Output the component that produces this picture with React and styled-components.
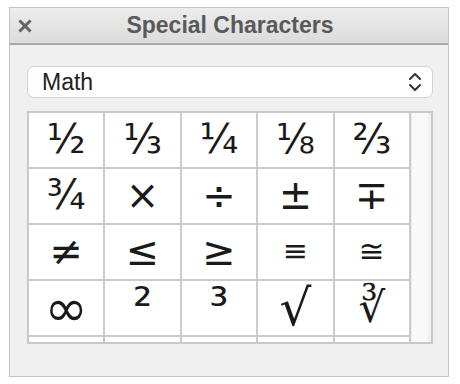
import React, { useState } from 'react';
import styled, { createGlobalStyle } from 'styled-components';

const GlobalStyle = createGlobalStyle`
  body {
    margin: 0;
    background: #ffffff;
    font-family: 'Liberation Sans', Arial, sans-serif;
  }
`;

const Page = styled.div`
  padding: 7px 0 0 9px;
`;

const Window = styled.div`
  width: 438px;
  height: 368px;
  border: 1px solid #c4c4c4;
  background: #f0f0f0;
  display: flex;
  flex-direction: column;
`;

const TitleBar = styled.div`
  height: 35px;
  border-bottom: 2px solid #a8a8a8;
  background: linear-gradient(#ececec, #dcdcdc);
  display: flex;
  align-items: center;
  position: relative;
`;

const CloseButton = styled.button`
  position: absolute;
  left: 8px;
  top: 11px;
  width: 14px;
  height: 14px;
  padding: 0;
  border: none;
  background: none;
  display: flex;
`;

const Title = styled.h1`
  flex: 1;
  margin: 0;
  text-align: center;
  font-size: 23px;
  font-weight: bold;
  color: #595959;
  padding-left: 2px;
`;

const Body = styled.div`
  padding: 21px 15px 0 17px;
  display: flex;
  flex-direction: column;
  gap: 13px;
`;

const Select = styled.div`
  height: 30px;
  border: 1px solid #d2d2d2;
  border-radius: 7px;
  background: #ffffff;
  display: flex;
  align-items: center;
  justify-content: space-between;
  padding: 0 9px 0 14px;
  font-size: 23px;
  color: #222222;
`;

const GridBox = styled.div`
  height: 229px;
  border: 2px solid #c8c8c8;
  background: #ffffff;
  display: flex;
  overflow: hidden;
`;

const Grid = styled.div`
  flex: 1;
  display: grid;
  grid-template-columns: repeat(5, 1fr);
  grid-auto-rows: 56px;
  align-content: start;
`;

const Cell = styled.div`
  border-right: 2px solid #cbcbcb;
  border-bottom: 2px solid #cbcbcb;
  display: flex;
  align-items: ${p => (p.$sup ? 'flex-start' : 'center')};
  justify-content: center;
  font-family: ${p => (p.$serif ? "'DejaVu Serif', 'Liberation Serif', serif" : "'DejaVu Sans', sans-serif")};
  font-size: ${p => p.$size || 40}px;
  line-height: 1;
  color: #1a1a1a;
  padding: ${p => p.$pad || '0 0 2px'};
`;

const Track = styled.div`
  width: 19px;
  background: #f9f9f9;
  border-left: 1px solid #ececec;
  box-shadow: inset -3px 0 0 #f1f1f1;
`;

const chars = [
  { c: '½' }, { c: '⅓' }, { c: '¼' }, { c: '⅛' }, { c: '⅔' },
  { c: '¾' }, { c: '×' }, { c: '÷' }, { c: '±' }, { c: '∓' },
  { c: '≠' }, { c: '≤' }, { c: '≥' }, { c: '≡', size: 30 }, { c: '≅', size: 31 },
  { c: '∞', size: 52, pad: '0' },
  { c: '²', size: 48, sup: true, pad: '0' }, { c: '³', size: 48, sup: true, pad: '0' },
  { c: '√', serif: true, size: 50, pad: '0' }, { c: '∛', serif: true, size: 42, pad: '0' },
  { c: '' }, { c: '' }, { c: '' }, { c: '' }, { c: '' },
];

const Chevrons = () => (
  <svg width="16" height="22" viewBox="0 0 16 22" fill="none" stroke="#333" strokeWidth="2" strokeLinecap="round" strokeLinejoin="round">
    <polyline points="3,8 8,3 13,8" />
    <polyline points="3,14 8,19 13,14" />
  </svg>
);

const App = () => {
  const [category] = useState('Math');

  return (
    <>
      <GlobalStyle />
      <Page>
        <Window>
          <TitleBar>
            <CloseButton aria-label="Close">
              <svg width="14" height="14" viewBox="0 0 14 14" stroke="#656565" strokeWidth="3" strokeLinecap="square">
                <line x1="2.5" y1="2.5" x2="11.5" y2="11.5" />
                <line x1="11.5" y1="2.5" x2="2.5" y2="11.5" />
              </svg>
            </CloseButton>
            <Title>Special Characters</Title>
          </TitleBar>
          <Body>
            <Select>
              <span>{category}</span>
              <Chevrons />
            </Select>
            <GridBox>
              <Grid>
                {chars.map((ch, i) => (
                  <Cell key={i} $serif={ch.serif} $size={ch.size} $sup={ch.sup} $pad={ch.pad}>{ch.c}</Cell>
                ))}
              </Grid>
              <Track />
            </GridBox>
          </Body>
        </Window>
      </Page>
    </>
  );
};

export default App;
